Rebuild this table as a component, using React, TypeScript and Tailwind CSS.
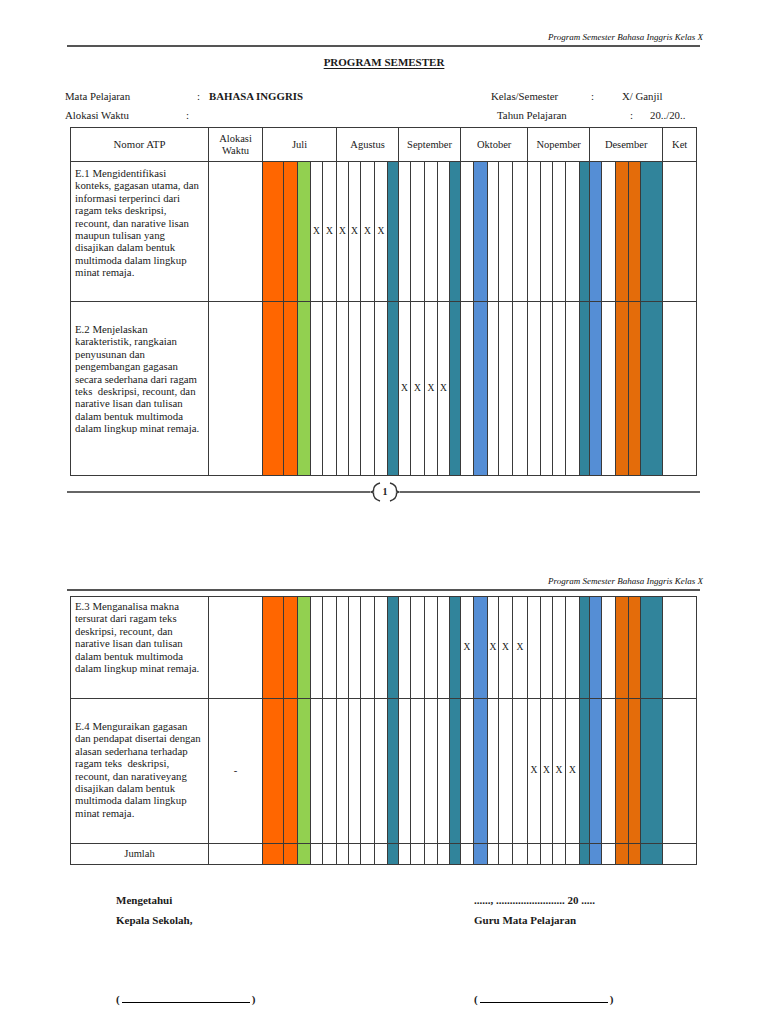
import React from "react";

const widths = [21, 14, 13, 12, 14, 12, 12, 14, 13, 11, 12, 14, 13, 12, 11, 13, 14, 11, 14, 15, 13, 12, 13, 14, 10, 12, 14, 13, 12, 22];

const colors: Record<number, string> = {
  0: "bg-[#ff6600]",
  1: "bg-[#ff6600]",
  2: "bg-[#92d050]",
  9: "bg-[#31849b]",
  14: "bg-[#31849b]",
  16: "bg-[#558ed5]",
  24: "bg-[#31849b]",
  25: "bg-[#558ed5]",
  27: "bg-[#e46c0a]",
  28: "bg-[#e46c0a]",
  29: "bg-[#31849b]",
};

const months = ["Juli", "Agustus", "September", "Oktober", "Nopember", "Desember"];

const cell = "border border-[#3a3a3a]";

function ColGroup() {
  return (
    <colgroup>
      <col className="w-[138px]" />
      <col className="w-[54px]" />
      {widths.map((w, i) => (
        <col key={i} style={{ width: w }} />
      ))}
      <col className="w-[34px]" />
    </colgroup>
  );
}

function WeekCells({ marks }: { marks: number[] }) {
  return (
    <>
      {widths.map((_, i) => (
        <td key={i} className={`${cell} ${colors[i] ?? ""} p-0 text-center align-middle text-[9.5px] leading-none`}>
          {marks.includes(i) ? "X" : ""}
        </td>
      ))}
    </>
  );
}

function DataRow({
  lines,
  h,
  pt,
  marks,
  alokasi,
}: {
  lines: string[];
  h: string;
  pt: string;
  marks: number[];
  alokasi?: string;
}) {
  return (
    <tr className={h}>
      <td className={`${cell} align-top pl-[4px] pr-0 ${pt}`}>
        {lines.map((l, i) => (
          <div key={i} className="whitespace-pre leading-[12.4px] text-[10.8px]">
            {l}
          </div>
        ))}
      </td>
      <td className={`${cell} text-center align-middle text-[10.5px]`}>{alokasi ?? ""}</td>
      <WeekCells marks={marks} />
      <td className={cell}></td>
    </tr>
  );
}

function RunningHeader() {
  return (
    <>
      <div className="flex justify-end pr-[65px] text-[9px] italic leading-[12px] text-[#111]">
        Program Semester Bahasa Inggris Kelas X
      </div>
      <div className="mt-[2px] ml-[67px] h-[2px] w-[633px] bg-[#555]"></div>
    </>
  );
}

function PageNumber() {
  return (
    <div className="mt-[5px] flex items-center pl-[67px]">
      <div className="h-[1.5px] w-[303px] bg-[#666]"></div>
      <div className="relative flex h-[22px] w-[30px] items-center justify-center">
        <svg width="30" height="22" viewBox="0 0 30 22" className="absolute left-0 top-0">
          <path d="M10 2 Q3 4 3.5 10 L1 11 L3.5 12 Q3 18 10 20" fill="none" stroke="#333" strokeWidth="1.4" />
          <path d="M20 2 Q27 4 26.5 10 L29 11 L26.5 12 Q27 18 20 20" fill="none" stroke="#333" strokeWidth="1.4" />
        </svg>
        <span className="relative text-[10px] font-bold leading-none">1</span>
      </div>
      <div className="h-[1.5px] w-[300px] bg-[#666]"></div>
    </div>
  );
}

export default function App() {
  return (
    <div className="min-h-[1024px] w-[768px] bg-white font-['Liberation_Serif',serif] text-[#1a1a1a]">
      <div className="pt-[31px]">
        <RunningHeader />
        <div className="mt-[8px] text-center text-[11px] font-bold leading-[14px] underline underline-offset-2">
          PROGRAM SEMESTER
        </div>
        <div className="mt-[20px] flex pl-[65px] text-[10.8px] leading-[14px]">
          <span className="w-[132px]">Mata Pelajaran</span>
          <span className="w-[12px]">:</span>
          <span className="w-[282px] font-bold">BAHASA INGGRIS</span>
          <span className="w-[100px]">Kelas/Semester</span>
          <span className="w-[31px]">:</span>
          <span>X/ Ganjil</span>
        </div>
        <div className="mt-[5px] flex pl-[65px] text-[10.8px] leading-[14px]">
          <span className="w-[121px]">Alokasi Waktu</span>
          <span className="w-[311px]">:</span>
          <span className="w-[133px]">Tahun Pelajaran</span>
          <span className="w-[20px]">:</span>
          <span>20../20..</span>
        </div>
        <div className="mt-[5px] pl-[70px]">
          <table className="w-[626px] table-fixed border-collapse border-[1.5px] border-[#3a3a3a]">
            <ColGroup />
            <tbody>
              <tr className="h-[34px]">
                <td className={`${cell} text-center align-middle text-[10.8px]`}>Nomor ATP</td>
                <td className={`${cell} text-center align-middle text-[10.5px] leading-[12px]`}>
                  Alokasi
                  <br />
                  Waktu
                </td>
                {months.map((m) => (
                  <td key={m} colSpan={5} className={`${cell} text-center align-middle text-[10.5px]`}>
                    {m}
                  </td>
                ))}
                <td className={`${cell} text-center align-middle text-[10.5px]`}>Ket</td>
              </tr>
              <DataRow
                h="h-[140px]"
                pt="pt-[5px]"
                marks={[3, 4, 5, 6, 7, 8]}
                lines={[
                  "E.1 Mengidentifikasi",
                  "konteks, gagasan utama, dan",
                  "informasi terperinci dari",
                  "ragam teks deskripsi,",
                  "recount, dan narative lisan",
                  "maupun tulisan yang",
                  "disajikan dalam bentuk",
                  "multimoda dalam lingkup",
                  "minat remaja.",
                ]}
              />
              <DataRow
                h="h-[174px]"
                pt="pt-[21px]"
                marks={[10, 11, 12, 13]}
                lines={[
                  "E.2 Menjelaskan",
                  "karakteristik, rangkaian",
                  "penyusunan dan",
                  "pengembangan gagasan",
                  "secara sederhana dari ragam",
                  "teks  deskripsi, recount, dan",
                  "narative lisan dan tulisan",
                  "dalam bentuk multimoda",
                  "dalam lingkup minat remaja.",
                ]}
              />
            </tbody>
          </table>
        </div>
        <PageNumber />

        <div className="mt-[72px]">
          <RunningHeader />
        </div>
        <div className="mt-[5px] pl-[70px]">
          <table className="w-[626px] table-fixed border-collapse border-[1.5px] border-[#3a3a3a]">
            <ColGroup />
            <tbody>
              <DataRow
                h="h-[102px]"
                pt="pt-[3px]"
                marks={[15, 17, 18, 19]}
                lines={[
                  "E.3 Menganalisa makna",
                  "tersurat dari ragam teks",
                  "deskripsi, recount, dan",
                  "narative lisan dan tulisan",
                  "dalam bentuk multimoda",
                  "dalam lingkup minat remaja.",
                ]}
              />
              <DataRow
                h="h-[145px]"
                pt="pt-[21px]"
                marks={[20, 21, 22, 23]}
                alokasi="-"
                lines={[
                  "E.4 Menguraikan gagasan",
                  "dan pendapat disertai dengan",
                  "alasan sederhana terhadap",
                  "ragam teks  deskripsi,",
                  "recount, dan narativeyang",
                  "disajikan dalam bentuk",
                  "multimoda dalam lingkup",
                  "minat remaja.",
                ]}
              />
              <tr className="h-[21px]">
                <td className={`${cell} text-center align-middle text-[10.5px]`}>Jumlah</td>
                <td className={cell}></td>
                <WeekCells marks={[]} />
                <td className={cell}></td>
              </tr>
            </tbody>
          </table>
        </div>

        <div className="mt-[28px] flex text-[11px] font-bold leading-[14px]">
          <div className="w-[474px] pl-[116px]">
            <div>Mengetahui</div>
            <div className="mt-[6px]">Kepala Sekolah,</div>
            <div className="mt-[65px] flex items-end">
              <span>(</span>
              <span className="mx-[2px] mb-[3px] inline-block w-[128px] border-b border-black"></span>
              <span>)</span>
            </div>
          </div>
          <div>
            <div>......, ......................... 20 .....</div>
            <div className="mt-[6px]">Guru Mata Pelajaran</div>
            <div className="mt-[65px] flex items-end">
              <span>(</span>
              <span className="mx-[2px] mb-[3px] inline-block w-[128px] border-b border-black"></span>
              <span>)</span>
            </div>
          </div>
        </div>
      </div>
    </div>
  );
}
